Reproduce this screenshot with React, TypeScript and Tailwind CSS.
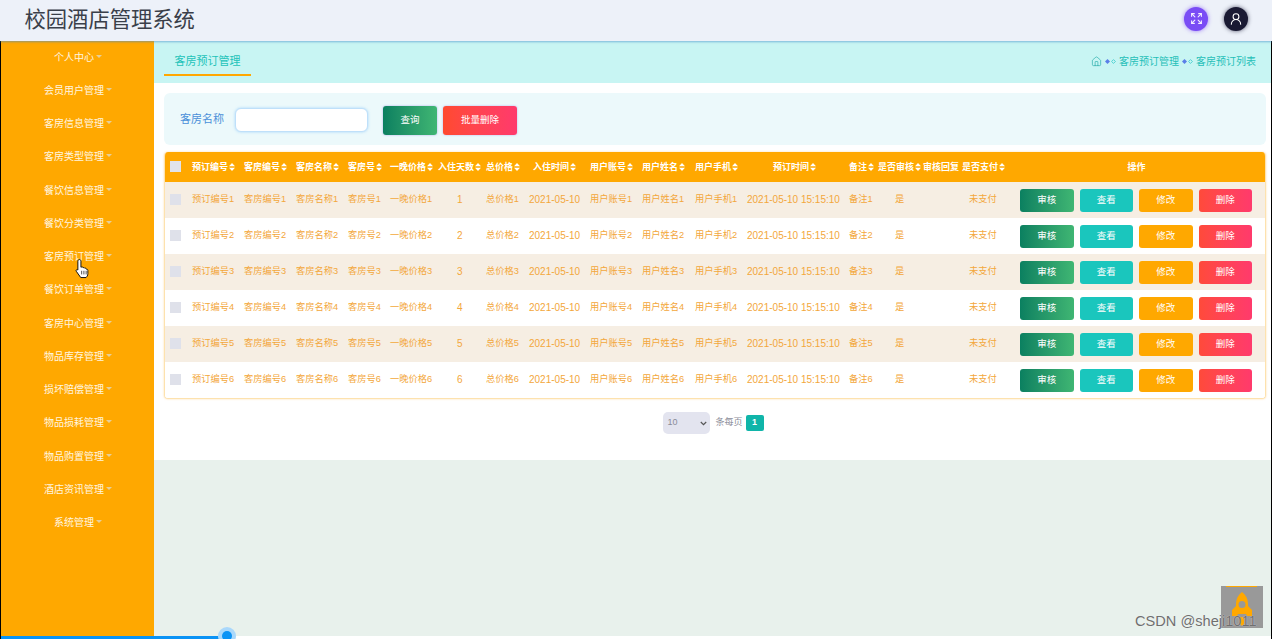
import { Expand, UserRound, House } from "lucide-react";

const menu = ["个人中心","会员用户管理","客房信息管理","客房类型管理","餐饮信息管理","餐饮分类管理","客房预订管理","餐饮订单管理","客房中心管理","物品库存管理","损坏赔偿管理","物品损耗管理","物品购置管理","酒店资讯管理","系统管理"];

type Col = { head: string; sort: boolean; w: string; hc: string; dc: string; data: (n: number) => string };
const cols: Col[] = [
  { head: "预订编号", sort: true, w: "w-[52px]", hc: "", dc: "text-[9.25px]", data: n => `预订编号${n}` },
  { head: "客房编号", sort: true, w: "w-[52px]", hc: "", dc: "text-[9.25px]", data: n => `客房编号${n}` },
  { head: "客房名称", sort: true, w: "w-[52px]", hc: "", dc: "text-[9.25px]", data: n => `客房名称${n}` },
  { head: "客房号", sort: true, w: "w-[42px]", hc: "", dc: "text-[9.25px]", data: n => `客房号${n}` },
  { head: "一晚价格", sort: true, w: "w-[48px]", hc: "", dc: "text-[9.25px]", data: n => `一晚价格${n}` },
  { head: "入住天数", sort: true, w: "w-[48px]", hc: "", dc: "pl-[19px] text-[10px]", data: n => `${n}` },
  { head: "总价格", sort: true, w: "w-[43px]", hc: "", dc: "text-[9.25px]", data: n => `总价格${n}` },
  { head: "入住时间", sort: true, w: "w-[61px]", hc: "pl-[4px]", dc: "text-[10px]", data: () => "2021-05-10" },
  { head: "用户账号", sort: true, w: "w-[52px]", hc: "", dc: "text-[9.25px]", data: n => `用户账号${n}` },
  { head: "用户姓名", sort: true, w: "w-[53px]", hc: "", dc: "text-[9.25px]", data: n => `用户姓名${n}` },
  { head: "用户手机", sort: true, w: "w-[52px]", hc: "", dc: "text-[9.25px]", data: n => `用户手机${n}` },
  { head: "预订时间", sort: true, w: "w-[102px]", hc: "pl-[26px]", dc: "text-[10px]", data: () => "2021-05-10 15:15:10" },
  { head: "备注", sort: true, w: "w-[29px]", hc: "", dc: "text-[9.25px]", data: n => `备注${n}` },
  { head: "是否审核", sort: true, w: "w-[45px]", hc: "", dc: "pl-[17px] text-[9.25px]", data: () => "是" },
  { head: "审核回复", sort: false, w: "w-[39px]", hc: "", dc: "text-[9.25px]", data: () => "" },
  { head: "是否支付", sort: true, w: "w-[51px]", hc: "", dc: "pl-[7px] text-[9.25px]", data: () => "未支付" },
];

function Sort() {
  return (
    <svg width="6" height="8" viewBox="0 0 6 8" className="ml-[0.5px] inline-block align-[-1px]">
      <path d="M3 0 6 3.300H0zM3 8 0 4.700h6z" fill="#fff" />
    </svg>
  );
}

function Sep() {
  return (
    <svg width="11" height="5" viewBox="0 0 11 5" className="mx-[3px]">
      <path d="M2.500 0 5 2.500 2.500 5 0 2.500z" fill="#5b7fe8" />
      <path d="M8.500.6 10.400 2.500 8.500 4.400 6.600 2.500z" fill="none" stroke="#35c9c9" strokeWidth="0.800" />
    </svg>
  );
}

function RowBtn({ label, cls }: { label: string; cls: string }) {
  return (
    <button className={`h-[23px] w-[53.5px] rounded-[3px] text-[9.5px] text-white ${cls}`}>{label}</button>
  );
}

export default function App() {
  return (
    <div className="relative h-[639px] w-[1272px] overflow-hidden bg-white font-['Liberation_Sans','Noto_Sans_CJK_SC',sans-serif]">
      <header className="relative z-10 flex h-[41px] items-center justify-between bg-[#edf1f9] pl-[24.5px] pr-[24px] pt-px shadow-[0_1px_2px_rgba(70,140,200,0.6)]">
        <h1 className="mb-[1px] text-[21.3px] font-normal leading-none text-[#3a3f4a]">校园酒店管理系统</h1>
        <div className="mb-[5px] flex items-center gap-[16px]">
          <div className="flex h-[24px] w-[24px] items-center justify-center rounded-full bg-[#7a4cf5] shadow-[0_0_4px_rgba(122,76,245,0.7)]">
            <Expand size={13} color="#f4eeff" strokeWidth={2} />
          </div>
          <div className="flex h-[24px] w-[24px] items-center justify-center rounded-full bg-[#1a1a33] shadow-[0_0_4px_rgba(20,20,50,0.7)]">
            <UserRound size={14} color="#ffffff" strokeWidth={1.8} />
          </div>
        </div>
      </header>

      <div className="flex h-[595px]">
        <aside className="w-[154px] shrink-0 bg-[#ffa800]">
          {menu.map(m => (
            <div key={m} className="flex h-[33.25px] items-center justify-center pl-[2px] text-[10px] leading-none text-[#fff6e0]">
              <span>{m}</span>
              <span className="mb-[3px] ml-[2px] h-0 w-0 border-x-[3.5px] border-t-[3.5px] border-x-transparent border-t-[#e6cf9a]" />
            </div>
          ))}
        </aside>

        <main className="flex min-w-0 flex-1 flex-col bg-[#e8f1ec]">
          <div className="flex h-[42px] items-center justify-between bg-[#c8f5f3] pl-[10px] pr-[16px]">
            <div className="relative flex h-[42px] w-[87px] items-center justify-center pb-[2px]">
              <span className="text-[11px] text-[#22c3b9]">客房预订管理</span>
              <span className="absolute bottom-[7px] left-0 h-[2px] w-full bg-[#ffa800]" />
            </div>
            <div className="flex items-center pb-[2px] text-[10px] text-[#1fbfb8]">
              <House size={11} strokeWidth={1.4} color="#1fa9a6" />
              <Sep />
              <span>客房预订管理</span>
              <Sep />
              <span>客房预订列表</span>
            </div>
          </div>

          <section className="h-[377px] bg-white pl-[10px] pr-[6px] pt-[10px]">
            <div className="flex h-[52px] items-center rounded-[6px] bg-[#ecf9fb] pl-[16px]">
              <label className="mr-[12px] w-[43px] whitespace-nowrap text-[11px] text-[#4a90d9]">客房名称</label>
              <input className="mt-px h-[24px] w-[133px] rounded-[6px] border border-[#bfe0fa] bg-white shadow-[0_0_3px_rgba(120,190,250,0.6)]" />
              <button className="ml-[15px] mt-[3px] h-[29px] w-[54px] rounded-[3px] bg-gradient-to-r from-[#0a8060] to-[#3fb673] text-[9.5px] text-white shadow-[0_0_2px_rgba(120,100,220,0.6)]">查询</button>
              <button className="ml-[6px] mt-[3px] h-[29px] w-[74px] rounded-[3px] bg-gradient-to-r from-[#ff4a2e] to-[#ff3a6c] text-[9.5px] text-white shadow-[0_0_2px_rgba(120,100,220,0.5)]">批量删除</button>
            </div>

            <div className="mt-[7px] overflow-hidden rounded-[4px] border-x border-b border-[#fde2ae] shadow-[0_0_2px_rgba(255,190,90,0.6)]">
              <table className="w-[1101px] table-fixed border-collapse text-left text-[9px] leading-none">
                <colgroup>
                  <col className="w-[27px]" />
                  {cols.map(c => <col key={c.head} className={c.w} />)}
                  <col className="w-[253px]" />
                </colgroup>
                <thead>
                  <tr className="h-[30px] bg-[#ffa800] text-white">
                    <th className="pb-[2px] pl-[5px] font-normal"><span className="block h-[11px] w-[11px] bg-[#e1e3ea]" /></th>
                    {cols.map(c => (
                      <th key={c.head} className={`whitespace-nowrap font-bold ${c.hc}`}>
                        {c.head}{c.sort && <Sort />}
                      </th>
                    ))}
                    <th className="pr-[6px] text-center font-bold">操作</th>
                  </tr>
                </thead>
                <tbody>
                  {[1,2,3,4,5,6].map(n => (
                    <tr key={n} className={`h-[36px] text-[#f3a73b] ${n % 2 ? "bg-[#f6eee3]" : "bg-white"}`}>
                      <td className="pb-[2px] pl-[5px]"><span className="block h-[11px] w-[11px] bg-[#dfe1ea]" /></td>
                      {cols.map(c => (
                        <td key={c.head} className={`whitespace-nowrap ${c.dc}`}>{c.data(n)}</td>
                      ))}
                      <td className="pl-[7px]">
                        <div className="flex gap-[6px]">
                          <RowBtn label="审核" cls="bg-gradient-to-r from-[#0a8060] to-[#3fb673]" />
                          <RowBtn label="查看" cls="bg-[#1ac6bd]" />
                          <RowBtn label="修改" cls="bg-[#ffa800]" />
                          <RowBtn label="删除" cls="bg-gradient-to-r from-[#ff4a3a] to-[#ff3a6c]" />
                        </div>
                      </td>
                    </tr>
                  ))}
                </tbody>
              </table>
            </div>

            <div className="mt-[13px] flex items-center justify-center pr-[3px]">
              <div className="flex h-[22px] w-[47px] items-center justify-between rounded-[5px] bg-[#e3e4ef] pl-[4px] pr-[3px] text-[9px] text-[#8a8c99]">
                <span>10</span>
                <svg width="7" height="5" viewBox="0 0 7 5"><path d="M.8 1 3.500 3.700 6.200 1" fill="none" stroke="#555" strokeWidth="1.200" /></svg>
              </div>
              <span className="ml-[5px] text-[9px] text-[#8a8c99]">条每页</span>
              <span className="mb-px ml-[3px] flex h-[16px] w-[18px] items-center justify-center rounded-[2px] bg-[#10b5a9] text-[9px] font-bold text-white">1</span>
            </div>
          </section>
        </main>
      </div>

      <div className="h-[3px] w-[226px] bg-[#0a93f5]" />
      <div className="absolute bottom-[-6px] left-[218px] flex h-[18px] w-[18px] items-center justify-center rounded-full bg-[#a9d8fb]">
        <span className="block h-[10px] w-[10px] rounded-full bg-[#0a93f5]" />
      </div>

      <svg width="18" height="22" viewBox="0 0 20 24" className="absolute left-[74px] top-[258px]">
        <path d="M6 1.500c1 0 1.700.8 1.700 1.800V10l1-.3c.7-.2 1.400.2 1.600.8.700-.3 1.500 0 1.700.7.800-.3 1.700.1 1.800 1 .9-.2 1.600.4 1.600 1.300v3.500c0 2.200-1 3.500-2 4.500H7.500L2.500 14.500c-.8-1.100.6-2.400 1.700-1.500l.1.100V3.300c0-1 .7-1.800 1.700-1.800z" fill="#fff" stroke="#111" strokeWidth="1.100" />
        <path d="M8.500 14v4M11 14v4M13.500 14v4" stroke="#111" strokeWidth="0.800" />
      </svg>

      <div className="absolute left-[1221px] top-[586px] flex h-[42px] w-[42px] justify-center bg-[#999999]">
        <span className="absolute left-[5px] top-0 h-[1px] w-[31px] bg-[#ffa800]" />
        <svg width="28" height="34" viewBox="0 0 28 34" className="mt-[6px]">
          <path fillRule="evenodd" d="M14 0c4 3 6 7 6 12v2l4 4v6h-5l-1-2H10l-1 2H4v-6l4-4v-2C8 7 10 3 14 0zm0 9a3.500 3.500 0 1 0 0 7 3.500 3.500 0 0 0 0-7z" fill="#ffa800" />
          <path d="M12 25h4v7l-2 2-2-2z" fill="#ffa800" />
        </svg>
      </div>
      <span className="absolute left-[1135px] top-[614px] text-[14.6px] leading-none text-[#6f6f6f] [text-shadow:0_0_1px_rgba(255,255,255,0.8)]">CSDN @sheji1011</span>

      <div className="pointer-events-none absolute inset-0 border-x border-t border-black" />
    </div>
  );
}
